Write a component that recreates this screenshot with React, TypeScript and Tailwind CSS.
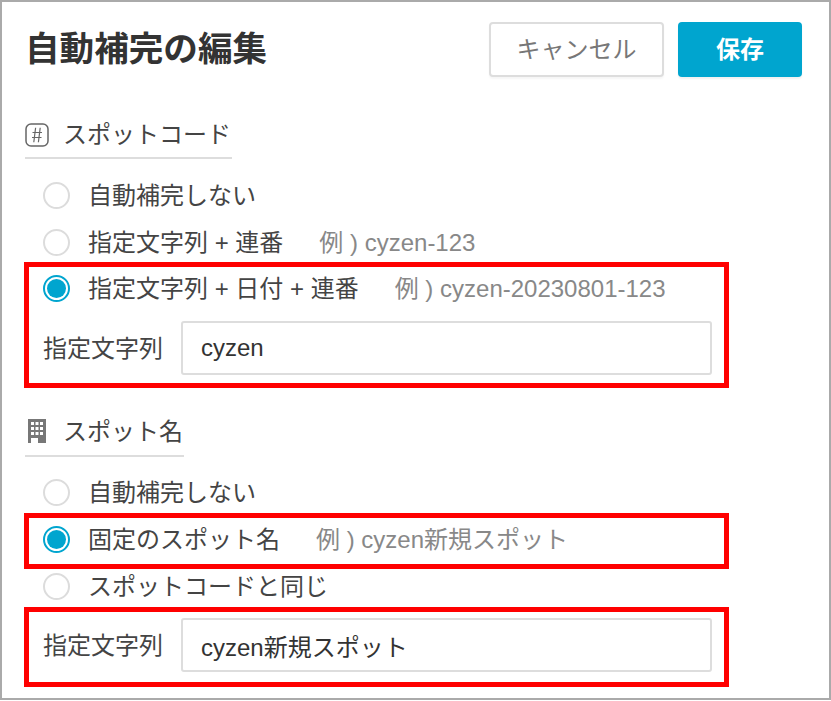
import React from 'react';

const font = "font-['Liberation_Sans','Noto_Sans_CJK_JP',sans-serif]";

function HashIcon() {
  return (
    <svg width="24" height="24" viewBox="0 0 24 24" fill="none" stroke="#666" className="shrink-0">
      <rect x="1" y="1" width="22" height="22" rx="5" strokeWidth="1.5" />
      <path d="M10.6 4.8 8.8 19.2M15.2 4.8 13.4 19.2M7.5 9.5h9.5M7 14.5h9.5" strokeWidth="1.2" />
    </svg>
  );
}

function BuildingIcon() {
  return (
    <svg width="18" height="24" viewBox="0 0 18 24" className="shrink-0">
      <path
        fillRule="evenodd"
        fill="#777"
        d="M0 0h18v24H10v-5H3v5H0ZM3 3v3h3V3Zm4.5 0v3h3V3ZM12 3v3h3V3ZM3 8v3h3V8Zm4.5 0v3h3V8ZM12 8v3h3V8ZM3 13v3h3v-3Zm4.5 0v3h3v-3ZM12 13v3h3v-3Z"
      />
    </svg>
  );
}

function Radio({ checked = false }: { checked?: boolean }) {
  return (
    <span
      className={`flex h-[27px] w-[27px] shrink-0 items-center justify-center rounded-full border-2 bg-white ${
        checked ? 'border-[#00a5cf]' : 'border-[#dcdcdc]'
      }`}
    >
      {checked && <span className="h-[19px] w-[19px] rounded-full bg-[#00a5cf]" />}
    </span>
  );
}

function Option({
  label,
  example,
  checked,
  className,
}: {
  label: string;
  example?: string;
  checked?: boolean;
  className: string;
}) {
  return (
    <div className={`flex items-center ${className}`}>
      <Radio checked={checked} />
      <span className="ml-[18px] pt-[1px] text-[24px] text-[#444]">{label}</span>
      {example && <span className="ml-[36px] pt-[1px] text-[24px] text-[#888]">{example}</span>}
    </div>
  );
}

function TextField({ value }: { value: string }) {
  return (
    <div className="flex items-center pl-[14px] pr-[12px]">
      <span className="w-[138px] pt-[1px] text-[24px] text-[#444]">指定文字列</span>
      <input
        readOnly
        value={value}
        className="h-[54px] flex-1 rounded-[3px] border-2 border-[#ddd] bg-white px-[18px] text-[24px] text-[#333] outline-none"
      />
    </div>
  );
}

export default function App() {
  return (
    <div className={`h-[700px] w-[831px] border-2 border-[#aaa] bg-white ${font}`}>
      <div className="flex items-start pl-[23px] pr-[27px] pt-[20px]">
        <h1 className="flex h-[55px] flex-1 items-center text-[34.6px] font-bold text-[#333]">自動補完の編集</h1>
        <button className="h-[55px] w-[175px] rounded-[4px] border-2 border-[#ddd] bg-white text-[24px] text-[#777] shadow-[0_2px_2px_rgba(0,0,0,0.04)]">
          キャンセル
        </button>
        <button className="ml-[14px] h-[55px] w-[124px] rounded-[4px] bg-[#00a5cf] text-[24px] font-bold text-white shadow-[0_2px_2px_rgba(0,0,0,0.06)]">
          保存
        </button>
      </div>

      <div className="mt-[35px] px-[22px]">
        <div className="ml-[1px] flex h-[47px] w-[207px] items-center border-b-2 border-[#ddd]">
          <HashIcon />
          <span className="ml-[14px] text-[24px] text-[#444]">スポットコード</span>
        </div>
        <Option className="mt-[13px] h-[46px] pl-[19px]" label="自動補完しない" />
        <Option className="mt-[1px] h-[43px] pl-[19px] pt-[3px]" label="指定文字列 + 連番" example="例 ) cyzen-123" />

        <div className="h-[126px] w-[705px] border-[5px] border-[#f00]">
          <Option className="h-[42px] pl-[14px]" checked label="指定文字列 + 日付 + 連番" example="例 ) cyzen-20230801-123" />
          <div className="mt-[12px]">
            <TextField value="cyzen" />
          </div>
        </div>

        <div className="ml-[1px] mt-[20px] flex h-[49px] w-[159px] items-center border-b-2 border-[#ddd]">
          <span className="mb-[1px] ml-[3px]">
            <BuildingIcon />
          </span>
          <span className="ml-[17px] whitespace-nowrap text-[24px] text-[#444]">スポット名</span>
        </div>
        <Option className="mt-[12px] h-[44px] pl-[19px] pt-[2px]" label="自動補完しない" />
        <div className="h-[56px] w-[705px] border-[5px] border-[#f00]">
          <Option className="h-[42px] pl-[14px]" checked label="固定のスポット名" example="例 ) cyzen新規スポット" />
        </div>
        <Option className="mb-[4px] h-[34px] pl-[19px]" label="スポットコードと同じ" />
        <div className="h-[80px] w-[705px] border-[5px] border-[#f00] pt-[6px]">
          <TextField value="cyzen新規スポット" />
        </div>
      </div>
    </div>
  );
}
